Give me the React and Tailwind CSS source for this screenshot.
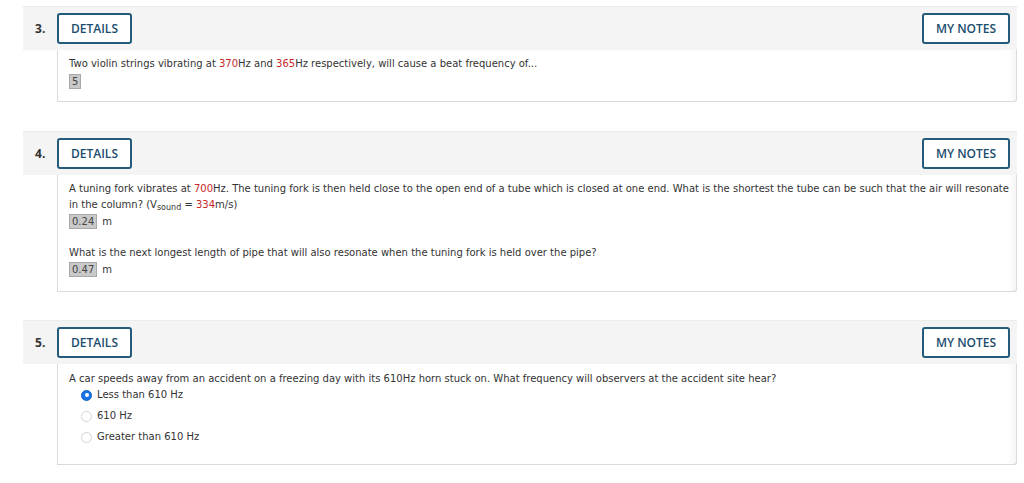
import React from 'react';

const body = { fontFamily: '"DejaVu Sans", Verdana, sans-serif' };
const ui = { fontFamily: '"Open Sans", "Noto Sans", sans-serif' };

const Red = ({ children }) => <span className="text-[#c62828]">{children}</span>;

const Answer = ({ children }) => (
  <span className="inline-block h-[15px] leading-[13px] px-[2px] bg-[#c9c9c9] border border-[#a8a8a8] text-[#444]">
    {children}
  </span>
);

const Radio = ({ checked }) =>
  checked ? (
    <span className="flex shrink-0 w-[11px] h-[11px] rounded-full bg-[#1a73e8] border border-[#1565c0] items-center justify-center">
      <span className="block w-[4px] h-[4px] rounded-full bg-white" />
    </span>
  ) : (
    <span className="block shrink-0 w-[11px] h-[11px] rounded-full bg-white border border-[#d4d4d4]" />
  );

const Question = ({ num, children }) => (
  <section className="ml-[23px] mr-[7px]">
    {/* header strip */}
    <div className="h-[44px] bg-[#f4f4f4] border-t border-[#ececec] flex items-center justify-between pr-[7px]" style={ui}>
      <div className="flex items-center">
        <span className="w-[34px] pl-[12px] text-[12px] font-bold text-[#333]">{num}.</span>
        <button className="h-[31px] w-[75px] rounded-[3px] border-2 border-[#245b7b] bg-white text-[12px] font-semibold text-[#1b4d6e]">
          DETAILS
        </button>
      </div>
      <button className="h-[31px] w-[88px] rounded-[3px] border-2 border-[#245b7b] bg-white text-[12px] font-semibold text-[#1b4d6e]">
        MY NOTES
      </button>
    </div>
    {/* question body */}
    <div
      className="ml-[34px] bg-white border-l border-b border-r border-[#dadada] rounded-br-[3px] shadow-[inset_-12px_0_10px_-10px_rgba(0,0,0,0.06)] pl-[11px] pr-[3px] text-[10px] leading-[16px] text-[#333]"
      style={body}
    >
      {children}
    </div>
  </section>
);

export default function App() {
  return (
    <div className="w-[1024px] h-[483px] bg-white overflow-hidden pt-[6px]">
      <Question num={3}>
        <div className="pt-[6px] pb-[12px]">
          <p>
            Two violin strings vibrating at <Red>370</Red>Hz and <Red>365</Red>Hz respectively, will cause a beat frequency of...
          </p>
          <div className="mt-[2px] leading-none">
            <Answer>5</Answer>
          </div>
        </div>
      </Question>

      <div className="h-[29px]" />

      <Question num={4}>
        <div className="pt-[6px] pb-[14px]">
          <p>
            A tuning fork vibrates at <Red>700</Red>Hz. The tuning fork is then held close to the open end of a tube which is closed at one end. What is the shortest the tube can be such that the air will resonate in the column? (V<sub className="text-[8px] leading-none">sound</sub> = <Red>334</Red>m/s)
          </p>
          <div className="mt-[1px] h-[15px] flex items-center">
            <Answer>0.24</Answer> <span className="ml-[5px]">m</span>
          </div>
          <p className="mt-[16px]">
            What is the next longest length of pipe that will also resonate when the tuning fork is held over the pipe?
          </p>
          <div className="mt-[1px] h-[15px] flex items-center">
            <Answer>0.47</Answer> <span className="ml-[5px]">m</span>
          </div>
        </div>
      </Question>

      <div className="h-[28px]" />

      <Question num={5}>
        <div className="pt-[7px] pb-[19px]">
          <p>
            A car speeds away from an accident on a freezing day with its 610Hz horn stuck on. What frequency will observers at the accident site hear?
          </p>
          <ul className="pl-[12px] flex flex-col gap-[5px]">
            <li className="flex items-center gap-[5px]"><Radio checked /> Less than 610 Hz</li>
            <li className="flex items-center gap-[5px]"><Radio /> 610 Hz</li>
            <li className="flex items-center gap-[5px]"><Radio /> Greater than 610 Hz</li>
          </ul>
        </div>
      </Question>
    </div>
  );
}
